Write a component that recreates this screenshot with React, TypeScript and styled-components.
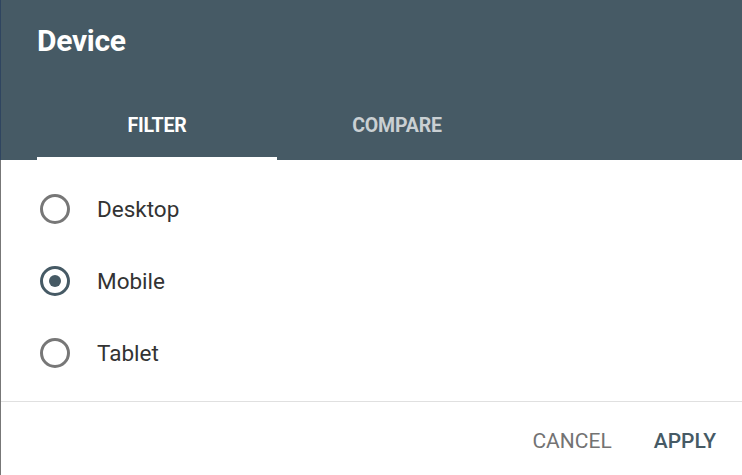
import React, { useState } from "react";
import styled, { createGlobalStyle } from "styled-components";

const Global = createGlobalStyle`
  html, body { margin: 0; padding: 0; background: #ffffff; }
  body { font-family: Roboto, "Noto Sans", "Liberation Sans", sans-serif; -webkit-font-smoothing: antialiased; }
  * { box-sizing: border-box; }
`;

const Dialog = styled.div`
  width: 742px;
  height: 475px;
  display: flex;
  flex-direction: column;
  background: #ffffff;
  overflow: hidden;
`;

const Header = styled.header`
  height: 160px;
  background: #465a65;
  border-left: 1px solid #2f4560;
  display: flex;
  flex-direction: column;
  justify-content: space-between;
  padding-left: 36px;
`;

const Title = styled.h1`
  margin: 23px 0 0;
  font-size: 30px;
  line-height: 36px;
  font-weight: 700;
  letter-spacing: -0.3px;
  color: #ffffff;
`;

const TabRow = styled.div`
  display: flex;
  height: 60px;
`;

const Tab = styled.button<{ $active?: boolean }>`
  width: 240px;
  height: 60px;
  border: none;
  background: transparent;
  padding: 0 0 7px;
  border-bottom: 3px solid ${(p) => (p.$active ? "#ffffff" : "transparent")};
  display: flex;
  align-items: center;
  justify-content: center;
  font-family: inherit;
  font-size: 19.5px;
  font-weight: 700;
  letter-spacing: -0.2px;
  color: ${(p) => (p.$active ? "#ffffff" : "rgba(255,255,255,0.72)")};
  cursor: pointer;
`;

const Body = styled.div`
  flex: 1;
  display: flex;
  flex-direction: column;
  border-left: 1px solid #777777;
`;

const List = styled.div`
  display: flex;
  flex-direction: column;
  padding: 13px 0 12px 39px;
`;

const Row = styled.label`
  height: 72px;
  display: flex;
  align-items: center;
  gap: 27px;
  cursor: pointer;
`;

const Circle = styled.span<{ $checked?: boolean }>`
  width: 30px;
  height: 30px;
  border-radius: 50%;
  border: ${(p) => (p.$checked ? "3.4px" : "3px")} solid ${(p) => (p.$checked ? "#465a65" : "#777777")};
  display: flex;
  align-items: center;
  justify-content: center;
  flex-shrink: 0;
  &::after {
    content: "";
    width: 12px;
    height: 12px;
    border-radius: 50%;
    background: #465a65;
    display: ${(p) => (p.$checked ? "block" : "none")};
  }
`;

const Label = styled.span`
  font-size: 22.5px;
  color: #333333;
`;

const Divider = styled.div`
  height: 1px;
  background: #e0e0e0;
`;

const Footer = styled.div`
  flex: 1;
  display: flex;
  align-items: center;
  justify-content: flex-end;
  gap: 42px;
  padding: 4px 26px 0 0;
`;

const ActionButton = styled.button<{ $primary?: boolean }>`
  border: none;
  background: transparent;
  padding: 0;
  font-family: inherit;
  font-size: 21px;
  font-weight: ${(p) => (p.$primary ? 500 : 400)};
  color: ${(p) => (p.$primary ? "#465a65" : "#737373")};
  cursor: pointer;
`;

const options = ["Desktop", "Mobile", "Tablet"];

export default function App() {
  const [tab, setTab] = useState("filter");
  const [value, setValue] = useState("Mobile");
  return (
    <>
      <Global />
      <Dialog>
        <Header>
          <Title>Device</Title>
          <TabRow>
            <Tab $active={tab === "filter"} onClick={() => setTab("filter")}>FILTER</Tab>
            <Tab $active={tab === "compare"} onClick={() => setTab("compare")}>COMPARE</Tab>
          </TabRow>
        </Header>
        <Body>
          <List>
            {options.map((o) => (
              <Row key={o} onClick={() => setValue(o)}>
                <Circle $checked={value === o} />
                <Label>{o}</Label>
              </Row>
            ))}
          </List>
          <Divider />
          <Footer>
            <ActionButton>CANCEL</ActionButton>
            <ActionButton $primary>APPLY</ActionButton>
          </Footer>
        </Body>
      </Dialog>
    </>
  );
}
